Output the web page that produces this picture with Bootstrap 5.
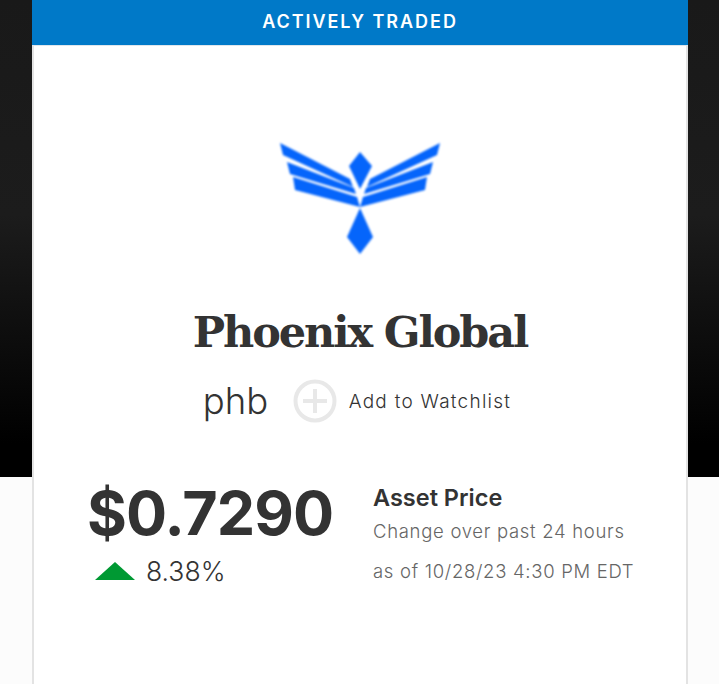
<!DOCTYPE html>
<html lang="en">
<head>
    <meta charset="UTF-8">
    <meta name="viewport" content="width=device-width, initial-scale=1">
    <title>Phoenix Global</title>
    <link href="https://cdn.jsdelivr.net/npm/bootstrap@5.3.0/dist/css/bootstrap.min.css" rel="stylesheet">
    <style>
        body {
            background: #fcfcfc;
            font-family: "Inter", "Liberation Sans", sans-serif;
            color: #333;
            height: 684px;
            overflow: hidden;
        }
        .hero-band {
            position: absolute;
            top: 0;
            left: 0;
            right: 0;
            height: 477px;
            background: linear-gradient(#191919, #1c1c1c 45%, #000 93%);
        }
        .asset-wrap {
            position: relative;
            padding: 0 31px 0 32px;
        }
        .asset-card {
            background: #fff;
            border-left: 2px solid #e3e3e3;
            border-right: 2px solid #e3e3e3;
            height: 684px;
        }
        .status-bar {
            background: #0079c8;
            color: #fff;
            height: 46px;
            border-bottom: 1px solid #dfe6ec;
            margin: 0 -2px;
            font-size: 18px;
            font-weight: 600;
            letter-spacing: 1.95px;
            line-height: 43px;
        }
        .coin-logo {
            display: block;
            width: 160px;
            height: 112px;
            margin: 96px auto 0;
            filter: blur(.9px);
        }
        .coin-name {
            font-family: "DejaVu Serif", "Liberation Serif", serif;
            font-size: 43px;
            font-weight: 700;
            letter-spacing: -2.1px;
            line-height: 56px;
            margin: 50px 0 0;
            color: #333;
        }
        .ticker-row {
            margin-top: 19px;
            height: 44px;
            padding-right: 6px;
        }
        .ticker {
            font-size: 36.5px;
            font-weight: 300;
            width: 65px;
            line-height: 44px;
        }
        .watch-btn {
            width: 44px;
            height: 44px;
            margin-left: 25px;
            margin-right: 12px;
        }
        .watch-text {
            font-size: 19px;
            font-weight: 300;
            letter-spacing: 1.25px;
            position: relative;
            top: 1px;
        }
        .price-row {
            margin-top: 54px;
            padding-left: 53px;
        }
        .price-col {
            width: 286px;
        }
        .price-value {
            font-size: 61px;
            font-weight: 700;
            line-height: 72px;
            letter-spacing: -.95px;
        }
        .change-line {
            margin-top: 6px;
            padding-left: 8px;
            font-size: 26.5px;
            font-weight: 300;
            line-height: 32px;
        }
        .up-arrow {
            width: 40px;
            height: 18px;
            margin-right: 11px;
        }
        .meta-title {
            font-size: 23.5px;
            font-weight: 600;
            line-height: 28px;
            margin-top: 7px;
        }
        .meta-text {
            font-size: 18.5px;
            font-weight: 300;
            color: #666;
            letter-spacing: .7px;
            line-height: 28px;
            margin-top: 5px;
        }
        .meta-text + .meta-text {
            margin-top: 12px;
        }
    </style>
</head>
<body>

<div class="hero-band"></div>

<div class="asset-wrap">
    <div class="asset-card">
        <div class="status-bar text-center">ACTIVELY TRADED</div>

        <svg class="coin-logo" viewBox="0 0 160 112">
            <g fill="#0565fb">
                <path d="M0 1 L70 37 L73 45 L3 13 Z"/>
                <path d="M7 20 L74 46 L76 52 L10 32 Z"/>
                <path d="M13 35 L77 55 L80 65 L15 48 Z"/>
                <path d="M160 1 L90 37 L87 45 L157 13 Z"/>
                <path d="M153 20 L86 46 L84 52 L150 32 Z"/>
                <path d="M147 35 L83 55 L80 65 L145 48 Z"/>
                <path d="M80 10 L92 24 L80 47 L69 24 Z"/>
                <path d="M80 66 L93 95 L80 112 L67 95 Z"/>
            </g>
        </svg>

        <h1 class="coin-name text-center">Phoenix Global</h1>

        <div class="ticker-row d-flex justify-content-center align-items-center">
            <span class="ticker">phb</span>
            <svg class="watch-btn" viewBox="0 0 44 44">
                <circle cx="22" cy="22" r="19.5" fill="none" stroke="#e8e8e8" stroke-width="4"/>
                <path d="M22 10 V34 M10 22 H34" stroke="#e8e8e8" stroke-width="4"/>
            </svg>
            <span class="watch-text">Add to Watchlist</span>
        </div>

        <div class="price-row d-flex">
            <div class="price-col">
                <div class="price-value">$0.7290</div>
                <div class="change-line d-flex align-items-center">
                    <svg class="up-arrow" viewBox="0 0 40 18"><path d="M20 0 L40 18 H0 Z" fill="#009933"/></svg>
                    <span>8.38%</span>
                </div>
            </div>
            <div>
                <div class="meta-title">Asset Price</div>
                <div class="meta-text">Change over past 24 hours</div>
                <div class="meta-text">as of 10/28/23 4:30 PM EDT</div>
            </div>
        </div>
    </div>
</div>

<script src="https://cdn.jsdelivr.net/npm/bootstrap@5.3.0/dist/js/bootstrap.bundle.min.js"></script>
</body>
</html>
